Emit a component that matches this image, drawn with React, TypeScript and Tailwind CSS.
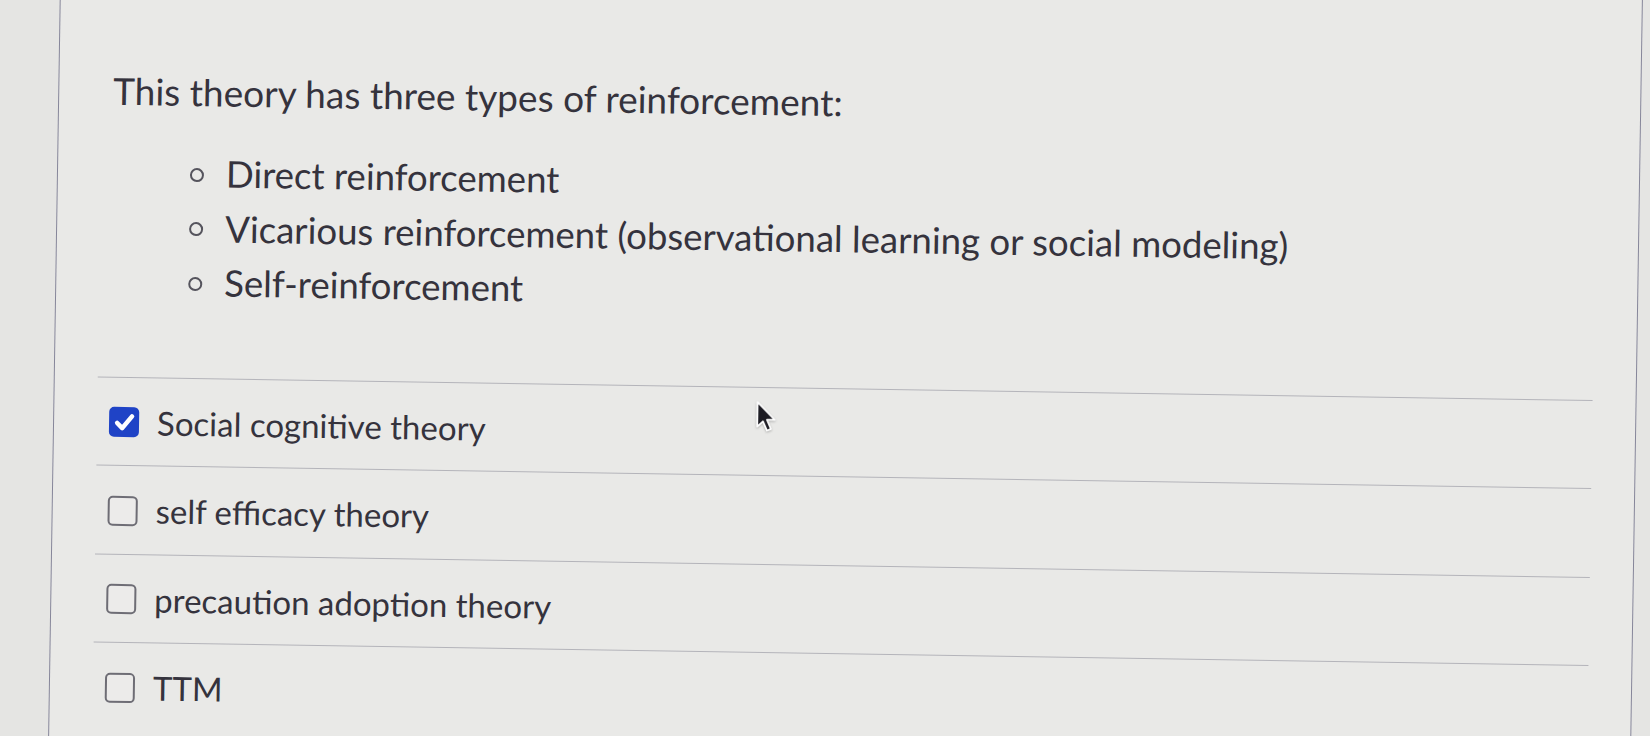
import React from "react";

type Answer = { label: string; checked: boolean };

const bullets = [
  "Direct reinforcement",
  "Vicarious reinforcement (observational learning or social modeling)",
  "Self-reinforcement",
];

const answers: Answer[] = [
  { label: "Social cognitive theory", checked: true },
  { label: "self efficacy theory", checked: false },
  { label: "precaution adoption theory", checked: false },
  { label: "TTM", checked: false },
];

function Checkbox({ checked }: { checked: boolean }) {
  if (checked) {
    return (
      <span className="flex h-[30px] w-[30px] shrink-0 items-center justify-center rounded-[5px] bg-[#1f43c6]">
        <svg width="25" height="25" viewBox="0 0 22 22" fill="none">
          <path
            d="M4.5 11.5 L9 16 L17.5 5.5"
            stroke="#ffffff"
            strokeWidth="4"
            strokeLinecap="round"
            strokeLinejoin="round"
          />
        </svg>
      </span>
    );
  }
  return (
    <span className="block h-[30px] w-[30px] shrink-0 rounded-[5px] border-[2.5px] border-[#6e6d75] bg-[#ecebea]" />
  );
}

function Cursor() {
  return (
    <svg
      width="24"
      height="36"
      viewBox="0 0 22 32"
      className="absolute left-[658px] top-[12px] drop-shadow-[0_1px_1px_rgba(0,0,0,0.25)]"
    >
      <path
        d="M2 1.5 L2 24 L7.2 19 L11 27.5 L14.6 26 L10.8 17.6 L18 17.6 Z"
        fill="#1c1b22"
        stroke="#ffffff"
        strokeWidth="1.6"
        strokeLinejoin="round"
      />
    </svg>
  );
}

export default function App() {
  return (
    <div className="h-[736px] w-[1650px] overflow-hidden bg-[#e5e5e3] font-['Lato',sans-serif] text-[#35333d]">
      <div className="-mt-[20px] h-[776px] origin-center rotate-[0.9deg] pl-[54px]">
        <div className="h-full w-[1583px] border-x-[1.5px] border-[#86869a] bg-[#e9e9e7] pl-[43px] pr-[43px] pt-[98px]">
          <h1 className="pl-[11px] text-[37px] font-normal leading-[48px]">
            This theory has three types of reinforcement:
          </h1>

          <ul className="mt-[30px] pl-[89px]">
            {bullets.map((b) => (
              <li key={b} className="flex h-[54.5px] items-center text-[36.6px] leading-[46px]">
                <span className="mr-[22px] mt-[3px] block h-[14px] w-[14px] shrink-0 rounded-full border-2 border-[#55545d]" />
                <span>{b}</span>
              </li>
            ))}
          </ul>

          <div className="mt-[68px]">
            {answers.map((a, i) => (
              <div
                key={a.label}
                className="relative flex h-[88.5px] items-center gap-[18px] border-t-[1.5px] border-[#b4b4ba] pl-[12px] pt-[2px] text-[33px]"
              >
                <Checkbox checked={a.checked} />
                <span>{a.label}</span>
                {i === 0 && <Cursor />}
              </div>
            ))}
          </div>
        </div>
      </div>
    </div>
  );
}
